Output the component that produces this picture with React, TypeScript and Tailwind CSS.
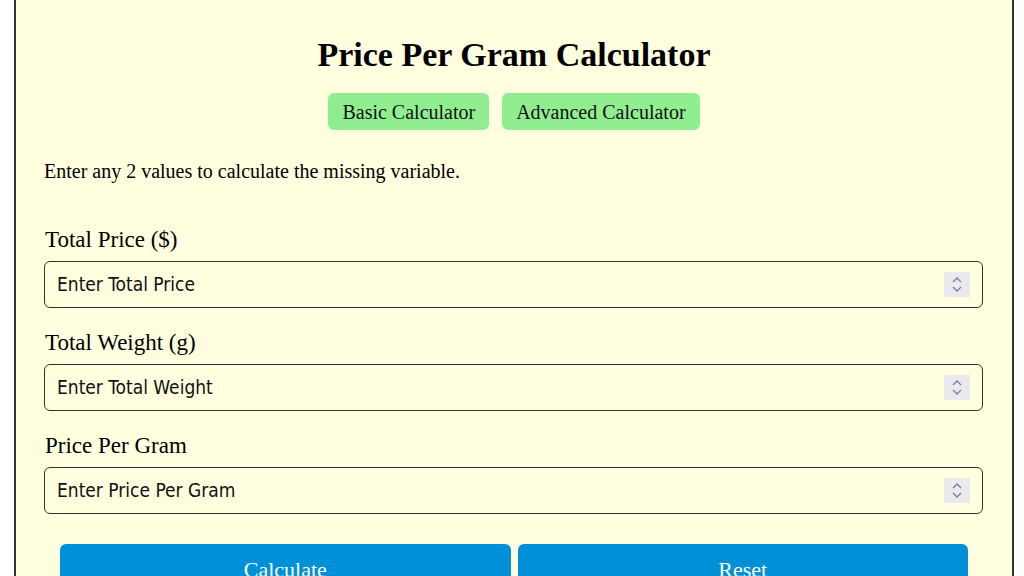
const fields = [
  { label: "Total Price ($)", placeholder: "Enter Total Price" },
  { label: "Total Weight (g)", placeholder: "Enter Total Weight" },
  { label: "Price Per Gram", placeholder: "Enter Price Per Gram" },
];

const Spinner = () => (
  <div className="w-[26px] h-[25px] bg-[#e9e9ef] flex flex-col items-center justify-center gap-[3px] shrink-0">
    <svg width="10" height="6" viewBox="0 0 10 6" fill="none">
      <path d="M1 5L5 1L9 5" stroke="#7a7f88" strokeWidth="1.3" />
    </svg>
    <svg width="10" height="6" viewBox="0 0 10 6" fill="none">
      <path d="M1 1L5 5L9 1" stroke="#7a7f88" strokeWidth="1.3" />
    </svg>
  </div>
);

const App = () => {
  return (
    <div className="min-h-screen bg-white font-['Liberation_Serif',serif] text-black overflow-hidden">
      {/* Calculator card */}
      <div className="ml-[14px] w-[1000px] min-h-[576px] bg-[#ffffe0] border-x-2 border-[#333] pt-[36px] px-[28px]">
        <h1 className="text-[34px] leading-[38px] font-bold text-center">
          Price Per Gram Calculator
        </h1>

        {/* Tabs */}
        <div className="flex justify-center gap-[13px] mt-[19px]">
          <button className="h-[37px] px-[14px] bg-[#90ee90] rounded-[6px] text-[20px] text-[#111]">
            Basic Calculator
          </button>
          <button className="h-[37px] px-[14px] bg-[#90ee90] rounded-[6px] text-[20px] text-[#111]">
            Advanced Calculator
          </button>
        </div>

        <p className="text-[20px] leading-[22px] mt-[30px]">
          Enter any 2 values to calculate the missing variable.
        </p>

        {/* Inputs */}
        <div className="mt-[45px] flex flex-col gap-[22px] w-[939px]">
          {fields.map((f) => (
            <div key={f.label} className="flex flex-col gap-[8px]">
              <label className="text-[23px] leading-[26px] pl-[1px]">{f.label}</label>
              <div className="h-[47px] border border-[#333] rounded-[6px] flex items-center pl-[12px] pr-[12px]">
                <input
                  className="flex-1 bg-transparent outline-none text-[19px] font-['DejaVu_Sans_Condensed','DejaVu_Sans',sans-serif] placeholder:text-[#111]"
                  placeholder={f.placeholder}
                />
                <Spinner />
              </div>
            </div>
          ))}
        </div>

        {/* Actions */}
        <div className="flex gap-[7px] mx-[16px] mt-[30px]">
          <button className="flex-1 h-[50px] bg-[#0090d8] rounded-t-[6px] text-white text-[22px]">
            Calculate
          </button>
          <button className="flex-1 h-[50px] bg-[#0090d8] rounded-t-[6px] text-white text-[22px]">
            Reset
          </button>
        </div>
      </div>
    </div>
  );
};

export default App;
